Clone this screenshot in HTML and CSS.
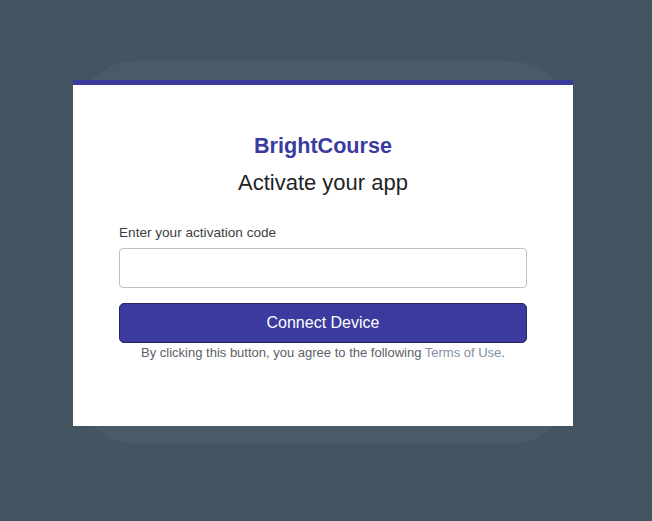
FILE: index.html
```html
<!DOCTYPE html>
<html lang="en">
<head>
<meta charset="utf-8">
<title>BrightCourse - Activate your app</title>
<link rel="stylesheet" href="styles.css">
</head>
<body>
<div class="backdrop">
  <main class="card">
    <h1 class="brand">BrightCourse</h1>
    <h2 class="title">Activate your app</h2>
    <form class="form">
      <label class="label" for="code">Enter your activation code</label>
      <input class="input" id="code" type="text">
      <button class="button" type="button">Connect Device</button>
      <p class="terms">By clicking this button, you agree to the following <a class="terms-link" href="#">Terms of Use</a>.</p>
    </form>
  </main>
</div>
</body>
</html>
```

FILE: styles.css
```css
html, body {
  margin: 0;
  height: 100%;
}
body {
  background: #445562;
  font-family: "Liberation Sans", Arial, sans-serif;
  padding: 61px 0 0 73px;
  box-sizing: border-box;
}
.backdrop {
  width: 500px;
  background: #4a5a66;
  border-radius: 64px;
  padding: 19px 0 18px;
}
.card {
  background: #ffffff;
  border-top: 5px solid #3b3a9f;
  padding: 48px 46px 65px;
  text-align: center;
}
.brand {
  margin: 0;
  font-size: 21.6px;
  line-height: 26px;
  font-weight: 700;
  color: #3b3a9f;
}
.title {
  margin: 11px 0 0;
  font-size: 22px;
  line-height: 26px;
  font-weight: 400;
  color: #222426;
}
.form {
  margin-top: 29px;
  display: flex;
  flex-direction: column;
  text-align: left;
}
.label {
  font-size: 13.6px;
  line-height: 16px;
  color: #3a3f45;
}
.input {
  margin-top: 6.5px;
  height: 40px;
  box-sizing: border-box;
  border: 1px solid #b6c0ca;
  border-radius: 4px;
  padding: 0 10px;
  font: inherit;
  font-size: 16px;
  background: #fff;
}
.button {
  margin-top: 15px;
  height: 40px;
  box-sizing: border-box;
  background: #3b3a9f;
  border: 1px solid #262660;
  border-radius: 5px;
  color: #ffffff;
  font-family: "Liberation Sans", Arial, sans-serif;
  font-size: 16px;
  cursor: pointer;
}
.terms {
  margin: 2px 0 0;
  font-size: 13px;
  line-height: 16px;
  color: #5b6168;
  text-align: center;
}
.terms-link {
  color: #8190a0;
  text-decoration: none;
}
```
